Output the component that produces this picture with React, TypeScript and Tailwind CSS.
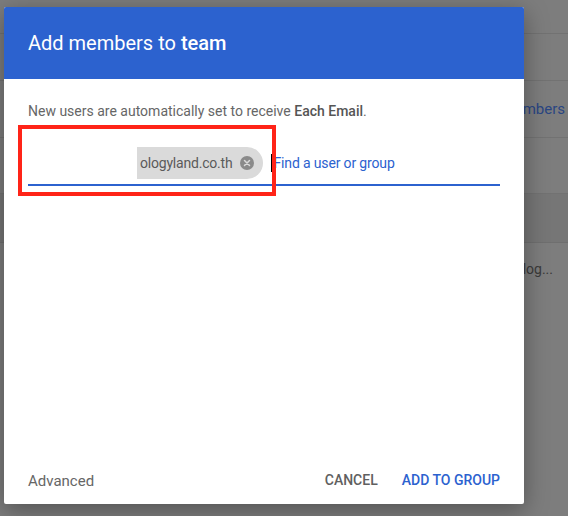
import React from 'react';

const font = { fontFamily: 'Roboto, "Noto Sans", Arial, sans-serif' };

function BackgroundPage() {
  return (
    <div className="flex h-full w-full flex-col bg-[#7d7d7d]">
      <div className="h-[34px] border-b border-[#727272]" />
      <div className="h-[47px] border-b border-[#727272]" />
      <div className="flex h-[57px] items-center justify-end border-b border-[#727272] pr-[3px]">
        <span className="text-[15px] text-[#2a4683]">Add members</span>
      </div>
      <div className="h-[56px] border-b border-[#727272]" />
      <div className="h-[49px] border-b border-[#6f6f6f] bg-[#767676]" />
      <div className="flex h-[52px] items-center justify-end pr-[15px]">
        <span className="text-[14px] text-[#3a3a3a]">technolog...</span>
      </div>
    </div>
  );
}

function EmailChip() {
  return (
    <div className="flex h-[32px] items-center">
      <div className="w-[109px]" />
      <div className="flex h-[32px] items-center rounded-r-full bg-[#dadada] pl-[3px] pr-[9px]">
        <span className="text-[14px] tracking-[-0.2px] text-[#5a5a5a]">ologyland.co.th</span>
        <span className="ml-[7px] flex h-[14px] w-[14px] items-center justify-center rounded-full bg-[#8a8a8a]">
          <svg width="8" height="8" viewBox="0 0 8 8">
            <path d="M1.5 1.5 L6.5 6.5 M6.5 1.5 L1.5 6.5" stroke="#dadada" strokeWidth="1.5" strokeLinecap="round" />
          </svg>
        </span>
      </div>
    </div>
  );
}

export default function App() {
  return (
    <div className="relative h-[516px] w-[568px] overflow-hidden" style={font}>
      <BackgroundPage />

      <div className="absolute left-[4px] top-[7px] flex h-[497px] w-[520px] flex-col rounded-[2px] bg-white shadow-[0_6px_24px_rgba(0,0,0,0.35)]">
        <div className="flex h-[72px] items-center rounded-t-[2px] bg-[#2c62cf] px-[24px]">
          <h1 className="text-[20px] text-white">
            Add members to <span className="font-medium">team</span>
          </h1>
        </div>

        <div className="flex flex-1 flex-col px-[24px]">
          <p className="mt-[22px] text-[14px] text-[#666666]">
            New users are automatically set to receive <span className="font-medium text-[#555555]">Each Email</span>.
          </p>

          <div className="mt-[25px] flex items-center border-b-2 border-[#2c62cf] pb-[5px]">
            <EmailChip />
            <span className="ml-[8px] h-[18px] w-[1px] bg-black" />
            <span className="ml-[2px] text-[14px] tracking-[-0.15px] text-[#2c62cf]">Find a user or group</span>
          </div>

          <div className="flex-1" />

          <div className="flex items-center pb-[12px]">
            <span className="text-[15px] text-[#666666]">Advanced</span>
            <div className="flex-1" />
            <button className="text-[14px] font-medium text-[#606060]">CANCEL</button>
            <button className="ml-[24px] text-[14px] font-medium text-[#2c62cf]">ADD TO GROUP</button>
          </div>
        </div>
      </div>

      <div className="absolute left-[18px] top-[125px] h-[71px] w-[258px] border-[4px] border-[#ff2418]" />
    </div>
  );
}
